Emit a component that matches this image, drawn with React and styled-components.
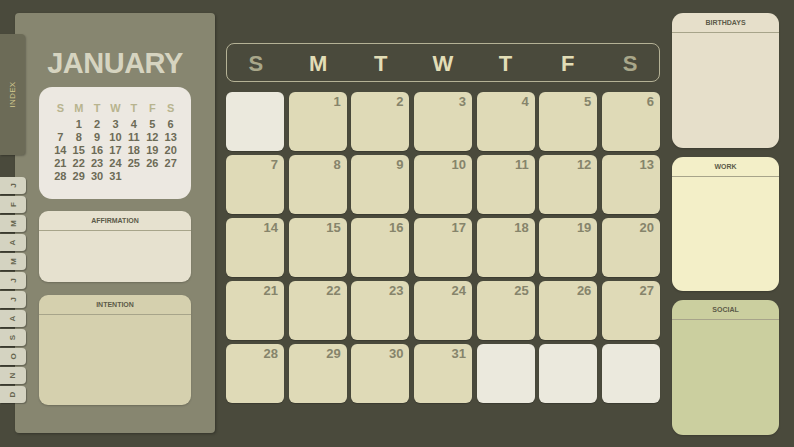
import React from 'react';
import styled, { createGlobalStyle } from 'styled-components';

const GlobalStyle = createGlobalStyle`
  html, body {
    margin: 0;
    padding: 0;
    background: #4a4a3c;
    font-family: "Liberation Sans", Arial, sans-serif;
  }
`;

const WEEK = ['S', 'M', 'T', 'W', 'T', 'F', 'S'];
const MONTHS = ['J', 'F', 'M', 'A', 'M', 'J', 'J', 'A', 'S', 'O', 'N', 'D'];

// January starts on a Monday: one blank, 31 days, then blanks to fill 5 weeks
const cells = [null, ...Array.from({ length: 31 }, (_, i) => i + 1), null, null, null];

const App = () => {
  return (
    <>
      <GlobalStyle />
      <Page>
        <LeftWrap>
          <TabColumn>
            <IndexTab><Rotated>INDEX</Rotated></IndexTab>
            <MonthTabs>
              {MONTHS.map((m, i) => (
                <MonthTab key={i}><Rotated>{m}</Rotated></MonthTab>
              ))}
            </MonthTabs>
          </TabColumn>
          <SidePanel>
            <MonthTitle>JANUARY</MonthTitle>
            <MiniCal>
              {WEEK.map((d, i) => <MiniHead key={'h' + i}>{d}</MiniHead>)}
              {cells.slice(0, 32).map((n, i) => <MiniDay key={i}>{n}</MiniDay>)}
            </MiniCal>
            <NoteCard $bg="#e6e1cf" $height={71} $top={12} $radius={9}>
              <NoteHeader>AFFIRMATION</NoteHeader>
            </NoteCard>
            <NoteCard $bg="#d5d0ae" $height={110} $top={13} $radius={9}>
              <NoteHeader>INTENTION</NoteHeader>
            </NoteCard>
          </SidePanel>
        </LeftWrap>

        <Center>
          <WeekBar>
            {WEEK.map((d, i) => (
              <WeekLetter key={i} $weekend={i === 0 || i === 6}>{d}</WeekLetter>
            ))}
          </WeekBar>
          <DayGrid>
            {cells.map((n, i) => (
              <DayCell key={i} $empty={n === null}>
                {n && <DayNum>{n}</DayNum>}
              </DayCell>
            ))}
          </DayGrid>
        </Center>

        <RightColumn>
          <NoteCard $bg="#e6dfca" $height={135} $radius={11}>
            <NoteHeader>BIRTHDAYS</NoteHeader>
          </NoteCard>
          <NoteCard $bg="#f3efc8" $height={134} $radius={11}>
            <NoteHeader>WORK</NoteHeader>
          </NoteCard>
          <NoteCard $bg="#cbcf9f" $height={135} $radius={11}>
            <NoteHeader>SOCIAL</NoteHeader>
          </NoteCard>
        </RightColumn>
      </Page>
    </>
  );
};

const Page = styled.div`
  width: 794px;
  height: 447px;
  box-sizing: border-box;
  padding-top: 13px;
  display: flex;
  align-items: flex-start;
  overflow: hidden;
`;

const LeftWrap = styled.div`
  display: flex;
  align-items: flex-start;
`;

const TabColumn = styled.div`
  position: relative;
  z-index: 2;
  width: 26px;
  margin-right: -11px;
  padding-top: 21px;
  display: flex;
  flex-direction: column;
`;

const Rotated = styled.span`
  display: inline-block;
  transform: rotate(-90deg);
  white-space: nowrap;
`;

const IndexTab = styled.div`
  width: 25px;
  height: 121px;
  background: #6c6b57;
  border-radius: 0 4px 4px 0;
  box-shadow: 1px 1px 2px rgba(0, 0, 0, 0.25);
  display: flex;
  align-items: center;
  justify-content: center;
  color: #d2c98e;
  font-size: 8px;
  letter-spacing: 0.3px;
`;

const MonthTabs = styled.div`
  margin-top: 22px;
  display: flex;
  flex-direction: column;
  gap: 2px;
`;

const MonthTab = styled.div`
  width: 26px;
  height: 17px;
  background: #d4d3c1;
  border-radius: 0 4px 4px 0;
  box-shadow: 1px 1px 1px rgba(0, 0, 0, 0.25);
  display: flex;
  align-items: center;
  justify-content: center;
  color: #66654f;
  font-size: 8px;
  font-weight: bold;
`;

const SidePanel = styled.div`
  width: 200px;
  height: 420px;
  box-sizing: border-box;
  padding: 36px 24px 0;
  background: #878670;
  border-radius: 4px;
  box-shadow: 1px 1px 3px rgba(0, 0, 0, 0.3);
  display: flex;
  flex-direction: column;
  align-items: center;
`;

const MonthTitle = styled.div`
  font-size: 29px;
  line-height: 29px;
  font-weight: bold;
  letter-spacing: -0.5px;
  color: #d6d4c0;
`;

const MiniCal = styled.div`
  margin-top: 9px;
  width: 152px;
  height: 112px;
  box-sizing: border-box;
  padding: 15px 11px 0 12px;
  background: #ece8e1;
  border-radius: 13px;
  display: grid;
  grid-template-columns: repeat(7, 18.4px);
  grid-template-rows: 16px repeat(5, 13px);
  justify-content: center;
  align-content: start;
  font-size: 11px;
  font-weight: bold;
  line-height: 13px;
  text-align: center;
`;

const MiniHead = styled.div`
  color: #b8b48f;
`;

const MiniDay = styled.div`
  color: #6c6b56;
`;

const NoteCard = styled.div`
  width: 100%;
  height: ${p => p.$height}px;
  margin-top: ${p => p.$top || 0}px;
  box-sizing: border-box;
  background: ${p => p.$bg};
  border-radius: ${p => p.$radius}px;
  box-shadow: 0 1px 2px rgba(0, 0, 0, 0.2);
  overflow: hidden;
  flex-shrink: 0;
`;

const NoteHeader = styled.div`
  height: 19px;
  border-bottom: 1px solid #a7a48a;
  display: flex;
  align-items: center;
  justify-content: center;
  font-size: 7px;
  font-weight: bold;
  color: #5c5b49;
`;

const Center = styled.div`
  width: 434px;
  margin-left: 11px;
  margin-top: 30px;
`;

const WeekBar = styled.div`
  height: 39px;
  box-sizing: border-box;
  padding-top: 2px;
  border: 1px solid #b5b296;
  border-radius: 8px;
  display: grid;
  grid-template-columns: repeat(7, 1fr);
  column-gap: 4.6px;
  align-items: center;
`;

const WeekLetter = styled.div`
  text-align: center;
  font-size: 22px;
  font-weight: bold;
  color: ${p => (p.$weekend ? '#a9a78a' : '#e2ddb6')};
`;

const DayGrid = styled.div`
  margin-top: 10px;
  display: grid;
  grid-template-columns: repeat(7, 1fr);
  grid-auto-rows: 59px;
  column-gap: 4.6px;
  row-gap: 4px;
`;

const DayCell = styled.div`
  background: ${p => (p.$empty ? '#ebe9dd' : '#dfdab7')};
  border-radius: 6px;
  box-shadow: 0 1px 1px rgba(0, 0, 0, 0.2);
  display: flex;
  justify-content: flex-end;
  align-items: flex-start;
  padding: 3px 6px 0 0;
`;

const DayNum = styled.span`
  font-size: 13px;
  line-height: 13px;
  font-weight: bold;
  color: #86846b;
`;

const RightColumn = styled.div`
  width: 107px;
  margin-left: 12px;
  display: flex;
  flex-direction: column;
  gap: 9px;
`;

export default App;
